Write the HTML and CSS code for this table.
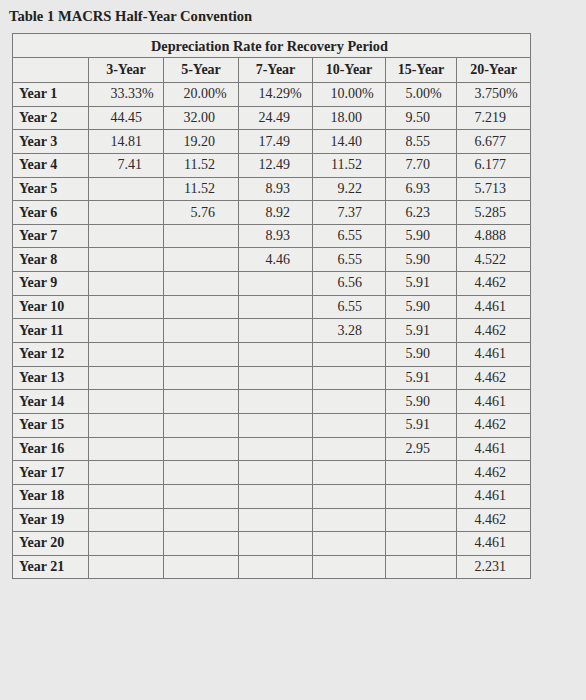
FILE: index.html
```html
<!DOCTYPE html>
<html>
<head>
<meta charset="utf-8">
<link rel="stylesheet" href="styles.css">
</head>
<body>
<div class="page">
  <h1 class="title">Table 1 MACRS Half-Year Convention</h1>
  <table class="macrs">
    <colgroup>
      <col class="c-label"><col class="c3"><col class="c5"><col class="c7"><col class="c10"><col class="c15"><col class="c20">
    </colgroup>
    <thead>
      <tr class="h1"><th colspan="7" class="span">Depreciation Rate for Recovery Period</th></tr>
      <tr class="h2"><th></th><th>3-Year</th><th>5-Year</th><th>7-Year</th><th>10-Year</th><th>15-Year</th><th>20-Year</th></tr>
    </thead>
    <tbody>
      <tr><th>Year 1</th><td>33.33<span class="pct">%</span></td><td>20.00<span class="pct">%</span></td><td>14.29<span class="pct">%</span></td><td>10.00<span class="pct">%</span></td><td>5.00<span class="pct">%</span></td><td>3.750<span class="pct">%</span></td></tr>
      <tr><th>Year 2</th><td>44.45</td><td>32.00</td><td>24.49</td><td>18.00</td><td>9.50</td><td>7.219</td></tr>
      <tr><th>Year 3</th><td>14.81</td><td>19.20</td><td>17.49</td><td>14.40</td><td>8.55</td><td>6.677</td></tr>
      <tr><th>Year 4</th><td>7.41</td><td>11.52</td><td>12.49</td><td>11.52</td><td>7.70</td><td>6.177</td></tr>
      <tr><th>Year 5</th><td></td><td>11.52</td><td>8.93</td><td>9.22</td><td>6.93</td><td>5.713</td></tr>
      <tr><th>Year 6</th><td></td><td>5.76</td><td>8.92</td><td>7.37</td><td>6.23</td><td>5.285</td></tr>
      <tr><th>Year 7</th><td></td><td></td><td>8.93</td><td>6.55</td><td>5.90</td><td>4.888</td></tr>
      <tr><th>Year 8</th><td></td><td></td><td>4.46</td><td>6.55</td><td>5.90</td><td>4.522</td></tr>
      <tr><th>Year 9</th><td></td><td></td><td></td><td>6.56</td><td>5.91</td><td>4.462</td></tr>
      <tr><th>Year 10</th><td></td><td></td><td></td><td>6.55</td><td>5.90</td><td>4.461</td></tr>
      <tr><th>Year 11</th><td></td><td></td><td></td><td>3.28</td><td>5.91</td><td>4.462</td></tr>
      <tr><th>Year 12</th><td></td><td></td><td></td><td></td><td>5.90</td><td>4.461</td></tr>
      <tr><th>Year 13</th><td></td><td></td><td></td><td></td><td>5.91</td><td>4.462</td></tr>
      <tr><th>Year 14</th><td></td><td></td><td></td><td></td><td>5.90</td><td>4.461</td></tr>
      <tr><th>Year 15</th><td></td><td></td><td></td><td></td><td>5.91</td><td>4.462</td></tr>
      <tr><th>Year 16</th><td></td><td></td><td></td><td></td><td>2.95</td><td>4.461</td></tr>
      <tr><th>Year 17</th><td></td><td></td><td></td><td></td><td></td><td>4.462</td></tr>
      <tr><th>Year 18</th><td></td><td></td><td></td><td></td><td></td><td>4.461</td></tr>
      <tr><th>Year 19</th><td></td><td></td><td></td><td></td><td></td><td>4.462</td></tr>
      <tr><th>Year 20</th><td></td><td></td><td></td><td></td><td></td><td>4.461</td></tr>
      <tr><th>Year 21</th><td></td><td></td><td></td><td></td><td></td><td>2.231</td></tr>
    </tbody>
  </table>
</div>
</body>
</html>
```

FILE: styles.css
```css
html, body {
  margin: 0;
  padding: 0;
}
body {
  background: #e8e9e8;
  color: #1f1f1f;
  font-family: "Liberation Serif", "Times New Roman", serif;
  width: 586px;
  height: 700px;
  overflow: hidden;
}
.page {
  padding: 6px 0 0 9px;
}
.title {
  margin: 0;
  font-size: 14.6px;
  font-weight: bold;
  line-height: 20px;
  color: #222;
}
.macrs {
  margin: 7px 0 0 3px;
  border-collapse: collapse;
  table-layout: fixed;
  width: 518px;
  background: #eeeeed;
  border: 1.5px solid #6a6a6a;
  font-size: 14px;
}
.c-label { width: 76px; }
.c3 { width: 75px; }
.c5 { width: 75px; }
.c7 { width: 74px; }
.c10 { width: 73px; }
.c15 { width: 71px; }
.c20 { width: 74px; }

.macrs th, .macrs td {
  border: 1.5px solid #7a7a7a;
  padding: 0;
  line-height: 16px;
  white-space: nowrap;
}
.macrs .h1 { height: 24px; }
.macrs .h1 .span {
  text-align: left;
  padding-left: 138px;
  font-size: 14.3px;
  font-weight: bold;
  color: #222;
}
.macrs .h2 { height: 25px; }
.macrs .h2 th {
  text-align: center;
  font-weight: bold;
  color: #222;
}
.macrs tbody tr { height: 23.65px; }
.macrs tbody th {
  text-align: left;
  font-weight: bold;
  padding-left: 6px;
  color: #222;
}
.macrs tbody td {
  text-align: right;
  padding-right: 21px;
  color: #2a2a2a;
}
.macrs tbody td:nth-child(3) { padding-right: 23px; }
.macrs tbody td:nth-child(4) { padding-right: 22px; }
.macrs tbody td:nth-child(5) { padding-right: 23px; }
.macrs tbody td:nth-child(6) { padding-right: 26px; }
.macrs tbody td:nth-child(7) { padding-right: 24px; }
.pct {
  display: inline-block;
  width: 0;
  overflow: visible;
}
```
